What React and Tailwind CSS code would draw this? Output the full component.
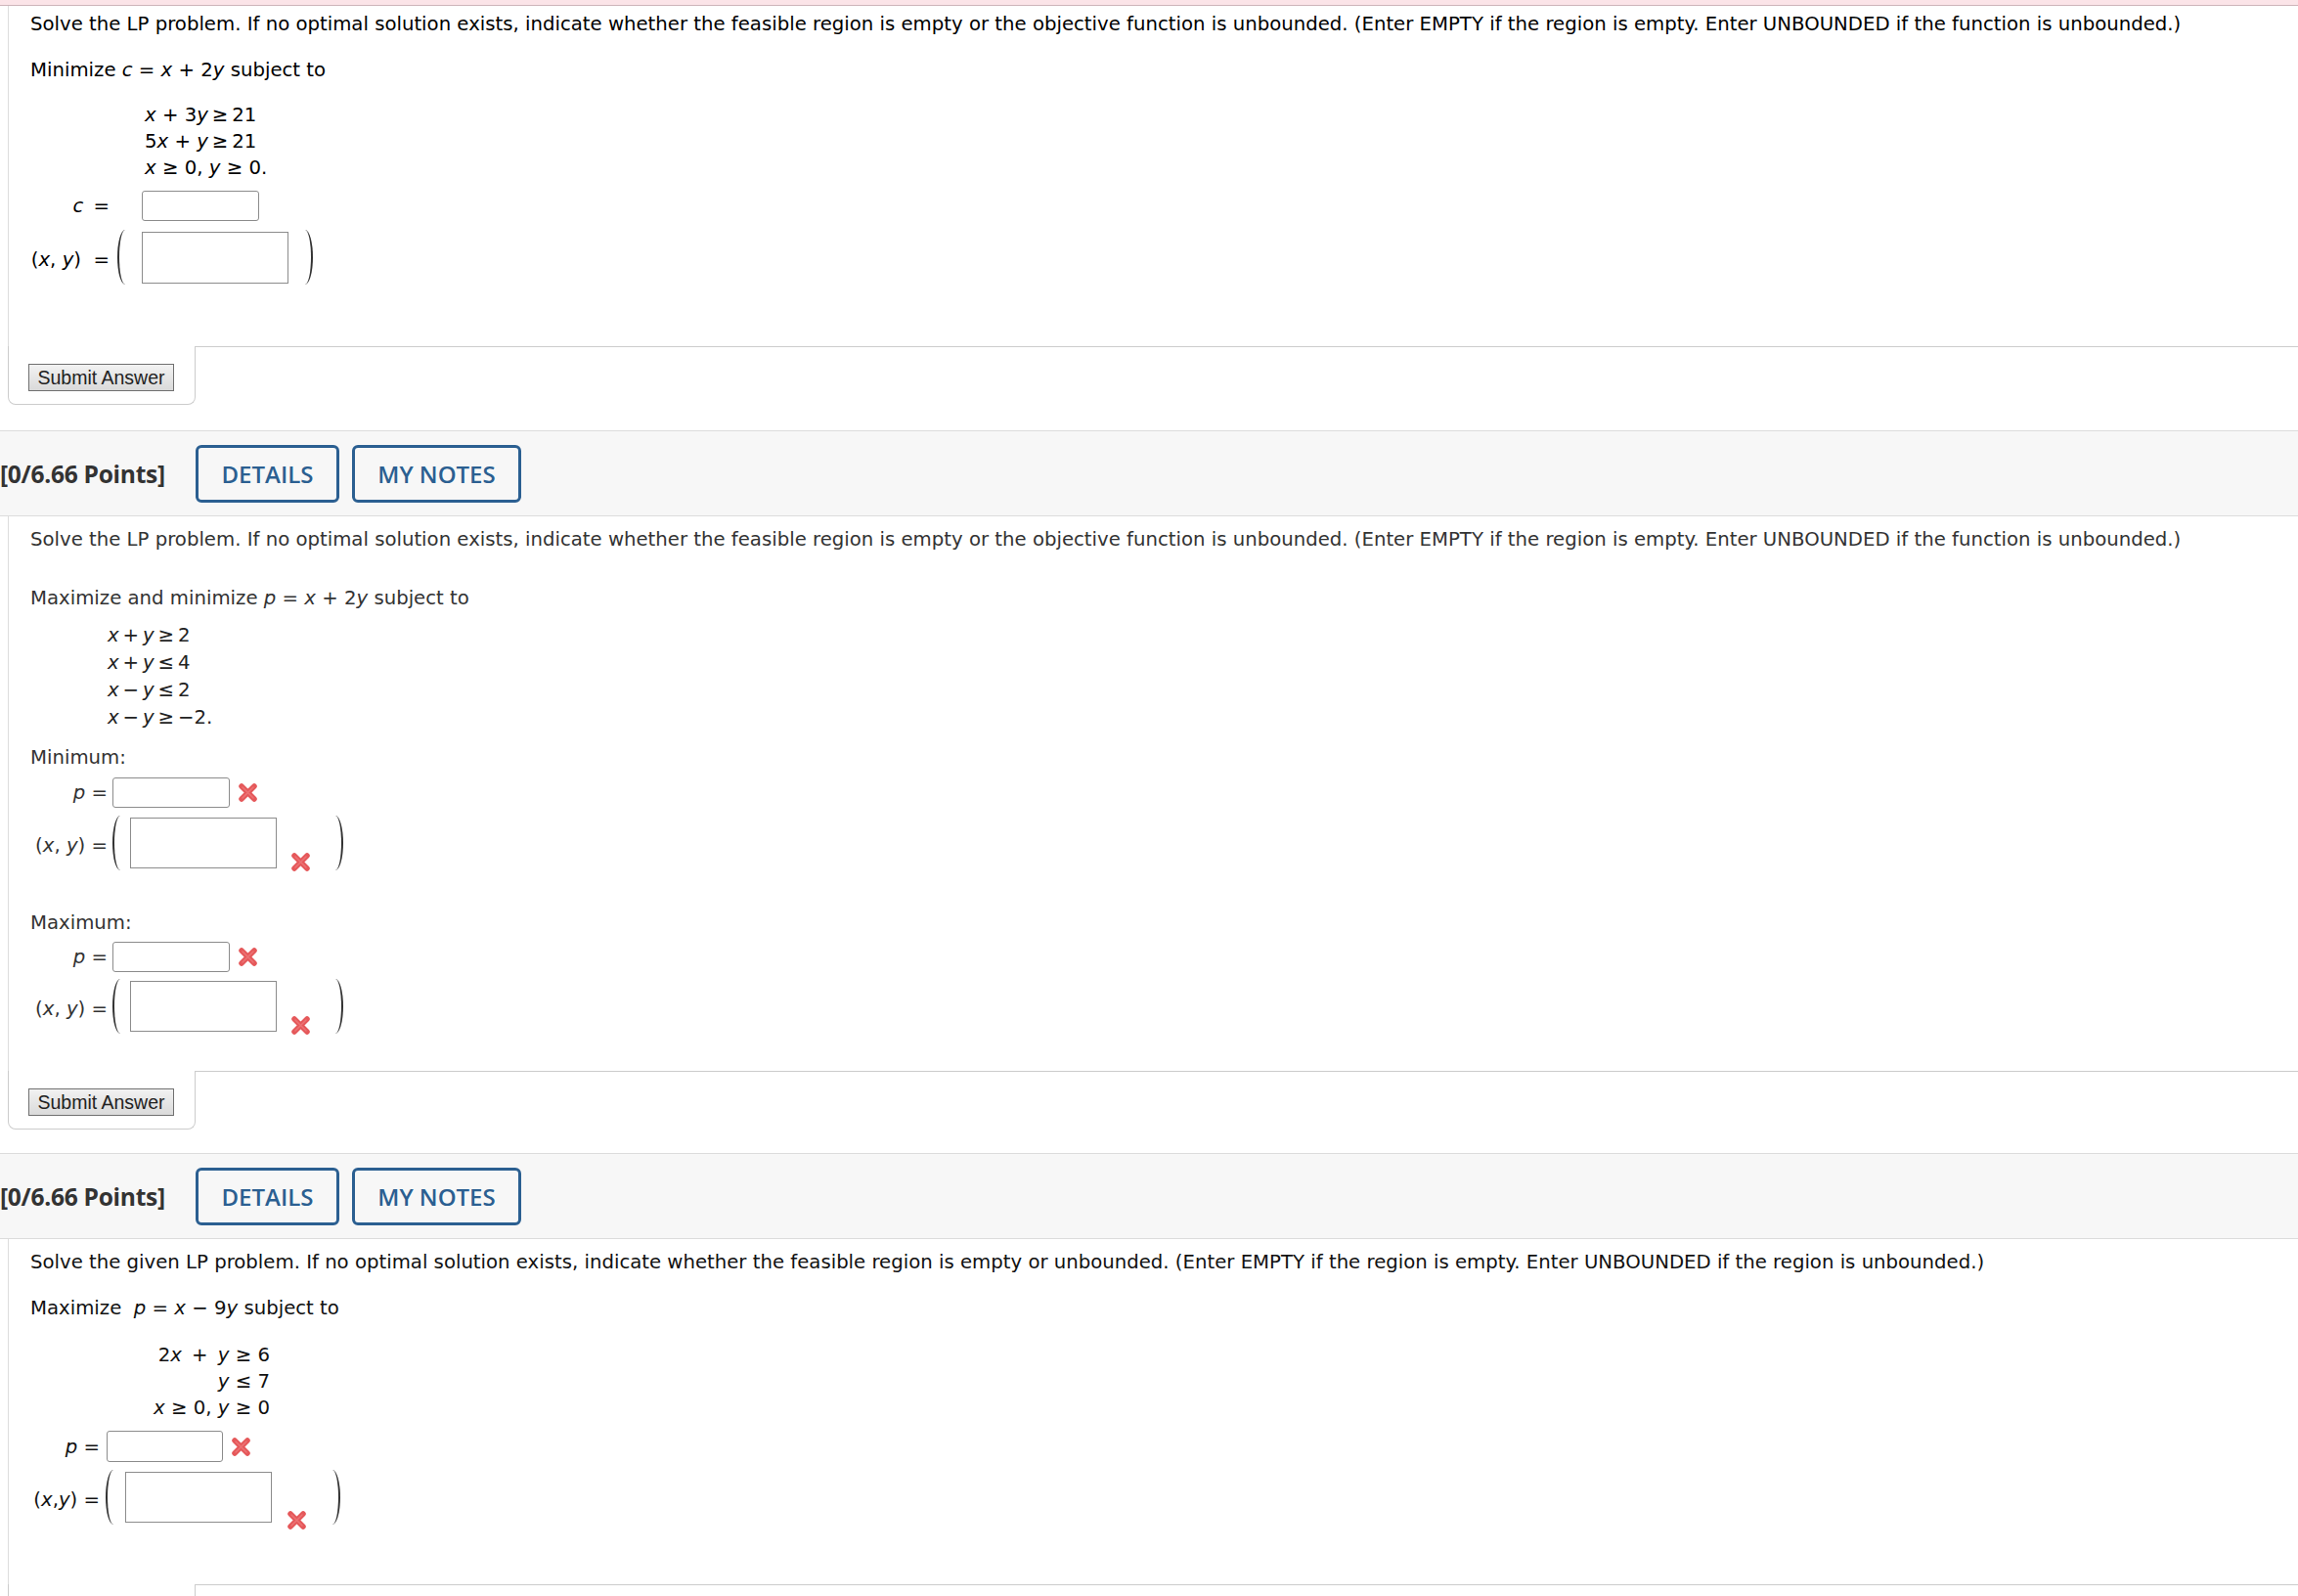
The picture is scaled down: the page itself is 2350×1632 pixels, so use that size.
import React from 'react';

const XMark = ({ className = '' }) => (
  <svg width="21" height="21" viewBox="0 0 21 21" className={className}>
    <path d="M4 4 L17 17 M17 4 L4 17" stroke="#e5585a" strokeWidth="5.5" strokeLinecap="round" />
    <path d="M5 5 L16 16 M16 5 L5 16" stroke="#f07f80" strokeWidth="1.5" strokeLinecap="round" opacity="0.7" />
  </svg>
);

const LeftParen = () => (
  <div className="w-[16px] h-[56px] shrink-0 rounded-[50%] border-l-2 border-[#333]" />
);
const RightParen = () => (
  <div className="w-[16px] h-[56px] shrink-0 rounded-[50%] border-r-2 border-[#333]" />
);

const Header = () => (
  <div className="flex items-center h-[88px] bg-[#f7f7f7] border-y border-[#dcdcdc] font-['Open_Sans',sans-serif]">
    <span className="w-[200px] text-[24.6px] font-bold text-[#333] tracking-[-0.3px]">[0/6.66 Points]</span>
    <button className="w-[147px] h-[59px] border-[3px] border-[#2b5f91] rounded-[6px] text-[24px] text-[#2b5f91] font-semibold">
      DETAILS
    </button>
    <button className="ml-[13px] w-[173px] h-[59px] border-[3px] border-[#2b5f91] rounded-[6px] text-[24px] text-[#2b5f91] font-semibold">
      MY NOTES
    </button>
  </div>
);

// the last footer sits below the fold, so its button is left out
const Footer = ({ showButton = true }) => (
  <div className="ml-[8px] flex">
    <div className="w-[192px] h-[60px] shrink-0 border-l border-r border-b border-[#cccccc] rounded-b-[8px] pl-[20px] pt-[18px]">
      {showButton && (
        <button className="block w-[149px] h-[28px] px-0 overflow-visible border border-[#707070] bg-gradient-to-b from-[#f2f2f2] to-[#dadada] text-[19.5px] leading-[26px] text-center text-[#222] font-['Liberation_Sans',Arial,sans-serif] whitespace-nowrap">
          Submit Answer
        </button>
      )}
    </div>
    <div className="flex-1 border-t border-[#cccccc]" />
  </div>
);

const Box = ({ w, h, rounded }) => (
  <input
    readOnly
    className={`${w} ${h} shrink-0 border border-[#8c8c8c] bg-white ${rounded ? 'rounded-[3px]' : ''}`}
  />
);

export default function App() {
  return (
    <div className="h-[1632px] overflow-hidden bg-white font-['DejaVu_Sans',Verdana,sans-serif] text-[19.7px] leading-[27px]">
      <div className="h-[6px] bg-[#fbe4e8] border-b border-[#cdb4b9]" />

      {/* question 1 */}
      <div className="ml-[8px] border-l border-[#dddddd] pl-[22px] pt-[5px] pb-[63px] text-black">
        <p>
          Solve the LP problem. If no optimal solution exists, indicate whether the feasible region is empty or the objective function is unbounded. (Enter EMPTY if the region is empty. Enter UNBOUNDED if the function is unbounded.)
        </p>
        <p className="mt-[20px]">
          Minimize <i>c</i> = <i>x</i> + 2<i>y</i> subject to
        </p>
        <div className="mt-[19px] pl-[117px]">
          <div><i>x</i> + 3<i>y</i>&thinsp;≥&thinsp;21</div>
          <div>5<i>x</i> + <i>y</i>&thinsp;≥&thinsp;21</div>
          <div><i>x</i> ≥ 0, <i>y</i> ≥ 0.</div>
        </div>
        <div className="mt-[10px] flex items-center">
          <span className="w-[89px] text-right pr-[8px]"><i>c</i>&nbsp;&thinsp;=</span>
          <span className="ml-[25px]"><Box w="w-[120px]" h="h-[31px]" rounded /></span>
        </div>
        <div className="mt-[9px] flex items-center">
          <span className="w-[89px] text-right pr-[8px] pt-[4px] whitespace-nowrap">(<i>x</i>, <i>y</i>)&nbsp; =</span>
          <LeftParen />
          <span className="ml-[9px]"><Box w="w-[150px]" h="h-[53px]" /></span>
          <span className="ml-[9px]"><RightParen /></span>
        </div>
      </div>
      <Footer />

      {/* question 2 */}
      <div className="mt-[26px]"><Header /></div>
      <div className="ml-[8px] border-l border-[#dddddd] pl-[22px] pt-[10px] pb-[38px] text-[#333]">
        <p>
          Solve the LP problem. If no optimal solution exists, indicate whether the feasible region is empty or the objective function is unbounded. (Enter EMPTY if the region is empty. Enter UNBOUNDED if the function is unbounded.)
        </p>
        <p className="mt-[33px]">
          Maximize and minimize <i>p</i> = <i>x</i> + 2<i>y</i> subject to
        </p>
        <div className="mt-[11px] pl-[79px] leading-[28px] text-[#222]">
          <div><i>x</i>&thinsp;+&thinsp;<i>y</i>&thinsp;≥&thinsp;2</div>
          <div><i>x</i>&thinsp;+&thinsp;<i>y</i>&thinsp;≤&thinsp;4</div>
          <div><i>x</i>&thinsp;−&thinsp;<i>y</i>&thinsp;≤&thinsp;2</div>
          <div><i>x</i>&thinsp;−&thinsp;<i>y</i>&thinsp;≥&thinsp;−2.</div>
        </div>

        <p className="mt-[13px]">Minimum:</p>
        <div className="mt-[7px] flex items-center">
          <span className="w-[79px] text-right"><i>p</i> =</span>
          <span className="ml-[5px]"><Box w="w-[120px]" h="h-[31px]" rounded /></span>
          <XMark className="ml-[8px]" />
        </div>
        <div className="mt-[8px] flex items-center">
          <span className="w-[79px] text-right pt-[4px] whitespace-nowrap">(<i>x</i>, <i>y</i>) =</span>
          <span className="ml-[5px]"><LeftParen /></span>
          <span className="ml-[2px]"><Box w="w-[150px]" h="h-[52px]" /></span>
          <XMark className="ml-[14px] self-end mb-[-2px]" />
          <span className="ml-[17px]"><RightParen /></span>
        </div>

        <p className="mt-[40px]">Maximum:</p>
        <div className="mt-[6px] flex items-center">
          <span className="w-[79px] text-right"><i>p</i> =</span>
          <span className="ml-[5px]"><Box w="w-[120px]" h="h-[31px]" rounded /></span>
          <XMark className="ml-[8px]" />
        </div>
        <div className="mt-[7px] flex items-center">
          <span className="w-[79px] text-right pt-[4px] whitespace-nowrap">(<i>x</i>, <i>y</i>) =</span>
          <span className="ml-[5px]"><LeftParen /></span>
          <span className="ml-[2px]"><Box w="w-[150px]" h="h-[52px]" /></span>
          <XMark className="ml-[14px] self-end mb-[-2px]" />
          <span className="ml-[17px]"><RightParen /></span>
        </div>
      </div>
      <Footer />

      {/* question 3 */}
      <div className="mt-[24px]"><Header /></div>
      <div className="ml-[8px] border-l border-[#dddddd] pl-[22px] pt-[10px] pb-[61px] text-[#111]">
        <p>
          Solve the given LP problem. If no optimal solution exists, indicate whether the feasible region is empty or unbounded. (Enter EMPTY if the region is empty. Enter UNBOUNDED if the region is unbounded.)
        </p>
        <p className="mt-[20px]">
          Maximize&nbsp; <i>p</i> = <i>x</i> − 9<i>y</i> subject to
        </p>
        <div className="mt-[21px] w-[245px] text-right">
          <div>2<i>x</i> &thinsp;+ &thinsp;<i>y</i> ≥ 6</div>
          <div><i>y</i> ≤ 7</div>
          <div><i>x</i> ≥ 0, <i>y</i> ≥ 0</div>
        </div>
        <div className="mt-[10px] flex items-center">
          <span className="w-[71px] text-right"><i>p</i> =</span>
          <span className="ml-[7px]"><Box w="w-[119px]" h="h-[32px]" rounded /></span>
          <XMark className="ml-[8px]" />
        </div>
        <div className="mt-[8px] flex items-center">
          <span className="w-[71px] text-right pt-[4px] whitespace-nowrap">(<i>x</i>,<i>y</i>) =</span>
          <span className="ml-[6px]"><LeftParen /></span>
          <span className="ml-[4px]"><Box w="w-[150px]" h="h-[52px]" /></span>
          <XMark className="ml-[15px] self-end mb-[-6px]" />
          <span className="ml-[18px]"><RightParen /></span>
        </div>
      </div>
      <Footer showButton={false} />
    </div>
  );
}
